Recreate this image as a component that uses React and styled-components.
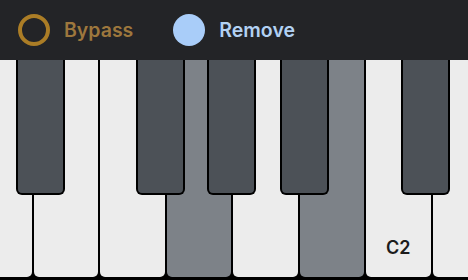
import React from "react";
import styled, { createGlobalStyle } from "styled-components";

const GlobalStyle = createGlobalStyle`
  html, body {
    margin: 0;
    padding: 0;
    background: #000;
  }
  body {
    font-family: Inter, "Noto Sans", sans-serif;
    width: 468px;
    height: 280px;
    overflow: hidden;
  }
`;

const whiteKeys = [
  { id: "d1" },
  { id: "e1" },
  { id: "f1" },
  { id: "g1", pressed: true },
  { id: "a1" },
  { id: "b1", pressed: true },
  { id: "c2", label: "C2" },
  { id: "d2" },
];

// left edge in px, measured from the visible left of the keyboard
const blackKeys = [
  { id: "ds1", left: 16 },
  { id: "fs1", left: 136 },
  { id: "gs1", left: 207 },
  { id: "as1", left: 280 },
  { id: "cs2", left: 401 },
];

const App = () => {
  return (
    <>
      <GlobalStyle />
      <Wrapper>
        <Toolbar>
          <Toggle $text="#9d773d">
            <Dot $color="#ab7d26" />
            <span>Bypass</span>
          </Toggle>
          <Toggle $text="#b2d1f3">
            <Dot $color="#a9cdf9" $filled />
            <span>Remove</span>
          </Toggle>
        </Toolbar>
        <Keyboard>
          <WhiteRow>
            {whiteKeys.map((key) => (
              <WhiteKey key={key.id} $pressed={key.pressed}>
                {key.label && <Label>{key.label}</Label>}
              </WhiteKey>
            ))}
          </WhiteRow>
          {blackKeys.map((key) => (
            <BlackKey key={key.id} $left={key.left} />
          ))}
        </Keyboard>
      </Wrapper>
    </>
  );
};

const Wrapper = styled.div`
  width: 468px;
  height: 280px;
  display: flex;
  flex-direction: column;
`;

const Toolbar = styled.header`
  height: 60px;
  background: #232427;
  display: flex;
  align-items: center;
  padding-left: 18px;
  gap: 40px;
  box-sizing: border-box;
`;

const Toggle = styled.div`
  display: flex;
  align-items: center;
  gap: 14px;
  font-size: 19.5px;
  font-weight: 600;
  color: ${(p) => p.$text};
  span {
    margin-top: -1px;
  }
`;

const Dot = styled.div`
  width: 32px;
  height: 32px;
  border-radius: 50%;
  box-sizing: border-box;
  border: ${(p) => (p.$filled ? "none" : `4px solid ${p.$color}`)};
  background: ${(p) => (p.$filled ? p.$color : "transparent")};
`;

const Keyboard = styled.div`
  position: relative;
  flex: 1;
  overflow: hidden;
  background: #000;
  padding-bottom: 3px;
  box-sizing: border-box;
  display: flex;
`;

const WhiteRow = styled.div`
  display: flex;
  gap: 2px;
  width: 530px;
  margin-left: -33px;
  flex-shrink: 0;
`;

const WhiteKey = styled.div`
  flex: 1;
  background: ${(p) => (p.$pressed ? "#7d8288" : "#ececec")};
  border-radius: 0 0 5px 5px;
  display: flex;
  align-items: flex-end;
  justify-content: center;
  padding-bottom: 19px;
  box-sizing: border-box;
`;

const Label = styled.span`
  font-size: 18px;
  font-weight: 600;
  color: #1c1c1c;
`;

const BlackKey = styled.div`
  position: absolute;
  top: 0;
  left: ${(p) => p.$left}px;
  width: 49px;
  height: 135px;
  box-sizing: border-box;
  background: #4c5157;
  border: 2px solid #000;
  border-top: none;
  border-radius: 0 0 6px 6px;
`;

export default App;
